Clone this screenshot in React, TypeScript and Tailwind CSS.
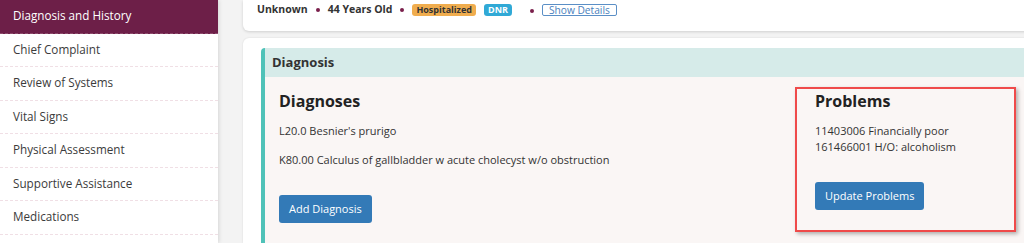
import React from "react";

const navItems = [
  "Diagnosis and History",
  "Chief Complaint",
  "Review of Systems",
  "Vital Signs",
  "Physical Assessment",
  "Supportive Assistance",
  "Medications",
];

function Dot() {
  return <span className="inline-block w-[4px] h-[4px] rounded-full bg-[#7a1f4b] mx-[8px]" />;
}

export default function App() {
  return (
    <div
      className="w-[1024px] h-[243px] overflow-hidden flex bg-[#f3f3f3] text-[#333]"
      style={{ fontFamily: '"Open Sans", "Noto Sans", sans-serif' }}
    >
      <aside className="w-[218px] shrink-0 bg-white shadow-[1px_0_4px_rgba(0,0,0,0.12)] z-10 flex flex-col">
        {navItems.map((item, i) => (
          <div
            key={item}
            className={
              i === 0
                ? "h-[33.5px] shrink-0 flex items-center pl-[13px] text-[11.7px] bg-[#6d1f48] text-white border-b border-dashed border-[#8e4b6d]"
                : "h-[33.5px] shrink-0 flex items-center pl-[13px] text-[11.7px] text-[#3b3b3b] border-b border-dashed border-[#f0dfe5]"
            }
          >
            {item}
          </div>
        ))}
      </aside>

      <main className="flex-1 pl-[25px] flex flex-col min-w-0">
        <div className="h-[31px] shrink-0 -mr-[40px] bg-white rounded-bl-[6px] shadow-[0_1px_3px_rgba(0,0,0,0.15)] flex items-center pl-[14px] pb-[11px] text-[10.5px]">
          <span className="font-bold text-[#333]">Unknown</span>
          <Dot />
          <span className="font-bold text-[#333]">44 Years Old</span>
          <Dot />
          <span className="bg-[#f0ad4e] text-[#333] font-bold text-[9px] leading-[12px] px-[4px] rounded-[3px]">Hospitalized</span>
          <span className="ml-[8px] bg-[#30a9d6] text-white font-bold text-[9px] leading-[12px] px-[4px] rounded-[3px]">DNR</span>
          <span className="ml-[10px]"><Dot /></span>
          <span className="border border-[#5b8fc6] text-[#4a7fbd] text-[10.2px] leading-[10px] px-[6px] rounded-[2px]">Show Details</span>
        </div>

        <div className="mt-[7px] flex-1 -mr-[40px] bg-white rounded-tl-[6px] shadow-[0_0_2px_rgba(0,0,0,0.12)] pt-[10px] pl-[18px]">
          <div className="border-l-4 border-[#4fc2b8] rounded-tl-[4px] h-full flex flex-col">
            <div className="h-[29px] shrink-0 bg-[#d6ebe9] flex items-center pl-[7px] text-[13px] font-bold text-[#333]">
              Diagnosis
            </div>
            <div className="flex-1 bg-[#faf6f5] flex pl-[14px] pt-[10px]">
              <div className="w-[516px] shrink-0">
                <h2 className="text-[16px] leading-[24px] font-bold text-[#222] mt-[2px]">Diagnoses</h2>
                <p className="text-[11px] leading-[16px] mt-[10px]">L20.0 Besnier's prurigo</p>
                <p className="text-[11px] leading-[16px] mt-[13px]">K80.00 Calculus of gallbladder w acute cholecyst w/o obstruction</p>
                <button className="mt-[27px] h-[28px] px-[10px] bg-[#337ab7] text-white text-[11px] rounded-[3px]">
                  Add Diagnosis
                </button>
              </div>
              <div className="w-[221px] h-[145px] shrink-0 border-2 border-[#ef4a4a] shadow-[2px_2px_4px_rgba(0,0,0,0.3)] pl-[18px]">
                <h2 className="text-[16px] leading-[24px] font-bold text-[#222]">Problems</h2>
                <p className="text-[11px] leading-[16px] mt-[10px]">11403006 Financially poor</p>
                <p className="text-[11px] leading-[16px]">161466001 H/O: alcoholism</p>
                <button className="mt-[27px] h-[28px] px-[10px] bg-[#337ab7] text-white text-[11px] rounded-[3px]">
                  Update Problems
                </button>
              </div>
            </div>
          </div>
        </div>
      </main>
    </div>
  );
}
